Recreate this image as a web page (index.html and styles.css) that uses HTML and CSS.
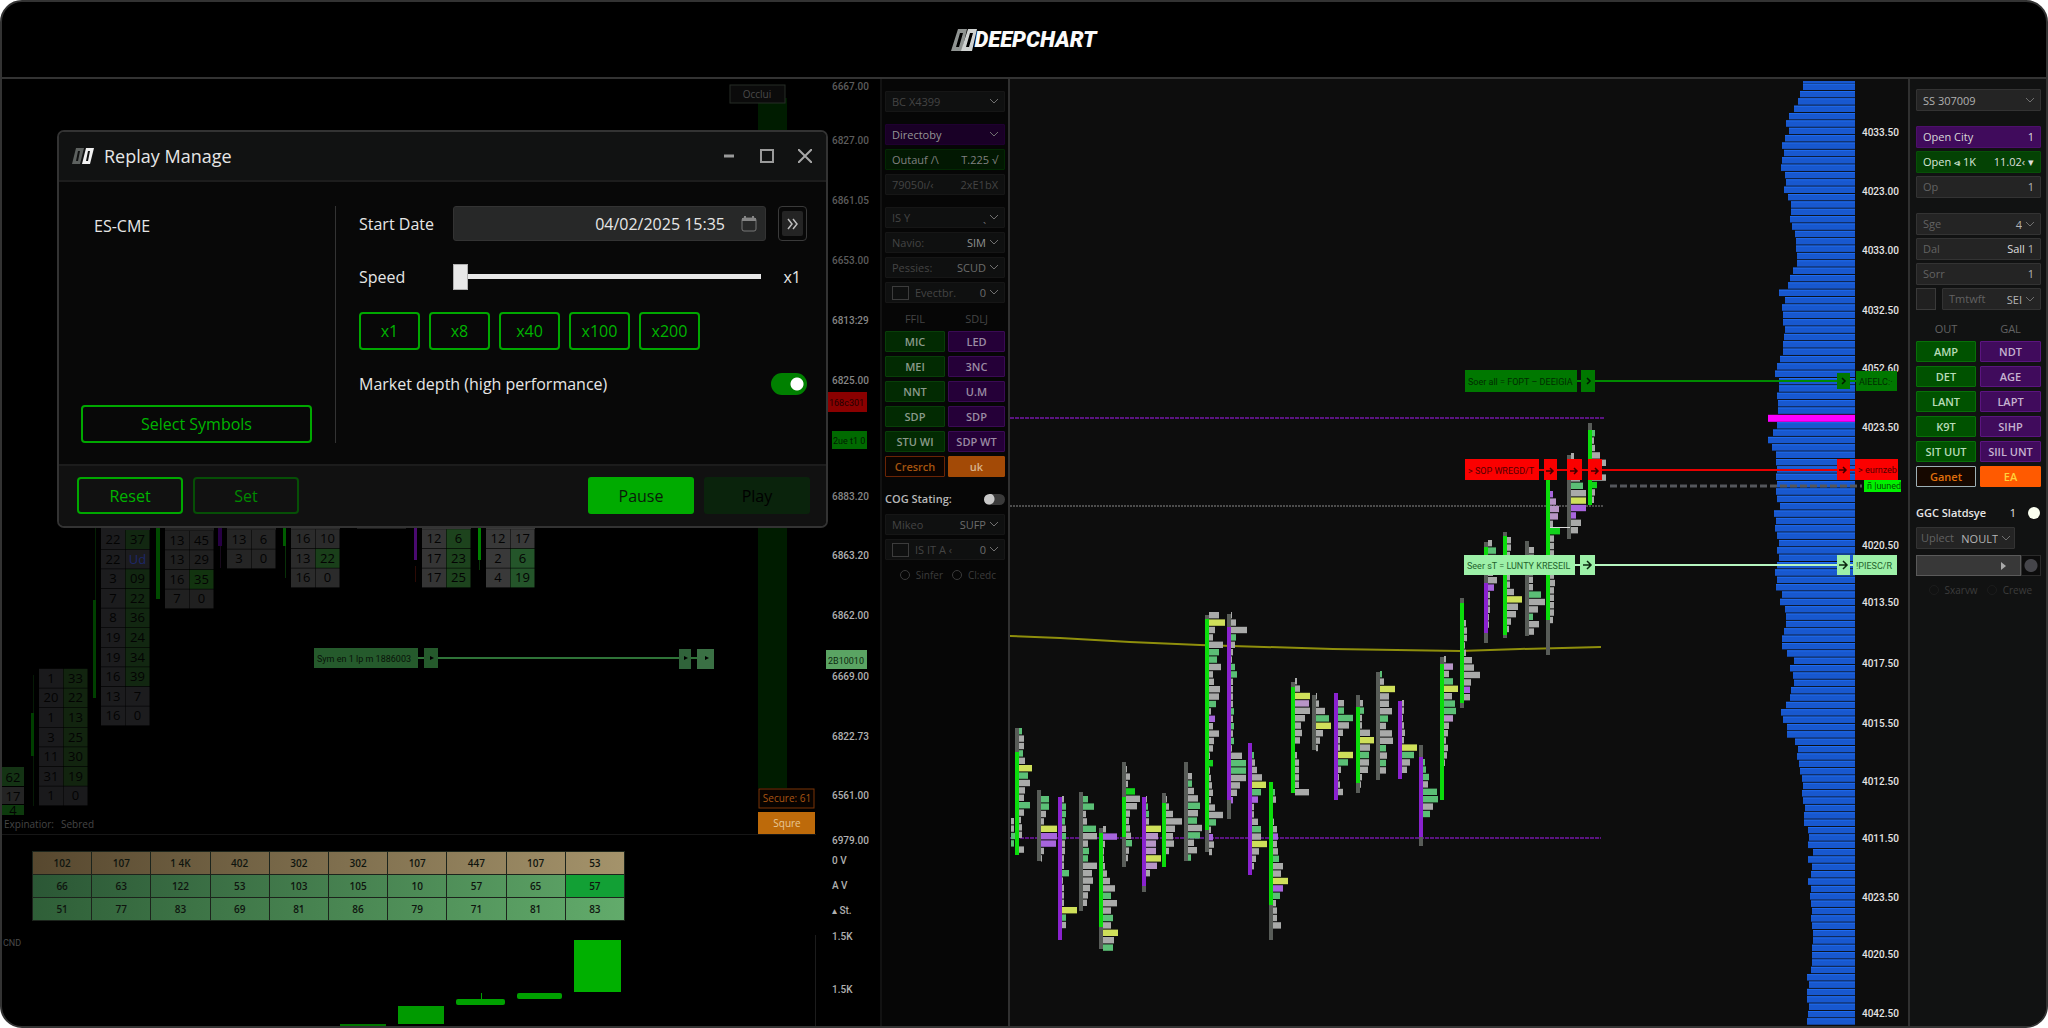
FILE: index.html
```html
<!DOCTYPE html>
<html lang="en">
<head>
    <meta charset="UTF-8">
    <meta name="viewport" content="width=device-width, initial-scale=1.0">
    <title>Deepchart</title>
    <link rel="stylesheet" href="styles.css">
</head>
<body>

<div class="app">

    <header class="header">
        <div class="logo">
            <svg class="logo-mark" width="28" height="22" viewBox="0 0 28 22">
                <path d="M7 0h9l-5 22H0zM9 4L5 18h3l4-14z" fill="#8f9391" fill-rule="evenodd"/>
                <path d="M17 0h9l-5 22H10zM19 4l-4 14h3l4-14z" fill="#cfd2d1" fill-rule="evenodd"/>
            </svg>
            <span>DEEPCHART</span>
        </div>
    </header>

    <main class="workspace">

        <!-- Left pane -->
        <section class="pane pane-left">

            <div class="studies">
                <svg class="chart" id="footprint" viewBox="2 79 814 756">
                    <rect x="758" y="98" width="29" height="690" fill="#001c00"/>
                    <rect x="730" y="85" width="55" height="18" fill="#0b0b0b" stroke="#262c26"/>
                    <text x="757" y="98" class="t-small" fill="#4a4a4a" text-anchor="middle">Occlui</text>
                    <g id="footprint-cells"></g>
                    <path d="M418 658H679M691 658h6" stroke="#2f7338" stroke-width="2"/>
                    <g fill="#255a2c">
                        <rect x="314" y="648" width="104" height="20"/>
                        <rect x="424" y="648" width="14" height="20"/>
                        <rect x="679" y="649" width="12" height="20" fill="#30633a"/>
                        <rect x="697" y="649" width="17" height="20" fill="#3a7044"/>
                    </g>
                    <text x="317" y="662" class="t-tag" fill="#081208">Sym en 1 lp m 1886003</text>
                    <path d="M430 656l4 2-4 2zM684 656l4 2-4 2zM705 656l4 2-4 2z" fill="#000"/>
                    <rect x="759" y="789" width="55" height="19" fill="#080300" stroke="#7a3406"/>
                    <text x="787" y="802" class="t-small" fill="#a85512" text-anchor="middle">Secure: 61</text>
                    <rect x="758" y="812" width="57" height="22" fill="#bd6a0a"/>
                    <text x="787" y="827" class="t-small" fill="#e8c897" text-anchor="middle">Squre</text>
                    <text x="4" y="828" class="t-small" fill="#454545">Expinatior:</text>
                    <text x="61" y="828" class="t-small" fill="#454545">Sebred</text>
                    <rect x="2" y="834" width="814" height="1" fill="#161616"/>
                </svg>

                <div class="volume">
                    <table class="volume-table">
                        <tr class="row-total"><td>102</td><td>107</td><td>1 4K</td><td>402</td><td>302</td><td>302</td><td>107</td><td>447</td><td>107</td><td>53</td></tr>
                        <tr class="row-ask"><td>66</td><td>63</td><td>122</td><td>53</td><td>103</td><td>105</td><td>10</td><td>57</td><td>65</td><td class="hot">57</td></tr>
                        <tr class="row-bid"><td>51</td><td>77</td><td>83</td><td>69</td><td>81</td><td>86</td><td>79</td><td>71</td><td>81</td><td>83</td></tr>
                    </table>
                </div>

                <svg class="chart" viewBox="2 920 814 106">
                    <text x="3" y="946" class="t-tag" fill="#4a4a4a">CND</text>
                    <g fill="#00a000">
                        <rect x="340" y="1024" width="46" height="2" fill="#007800"/>
                        <rect x="398" y="1006" width="46" height="18" fill="#009a00"/>
                        <rect x="456" y="999" width="49" height="6" rx="2"/>
                        <rect x="481" y="993" width="1" height="6"/>
                        <rect x="517" y="993" width="45" height="6" rx="2"/>
                        <rect x="574" y="940" width="47" height="52" fill="#00b000"/>
                    </g>
                    <rect x="815" y="935" width="1" height="91" fill="#1c1c1c"/>
                </svg>
            </div>

            <svg class="axis" viewBox="816 79 64 947">
                <g id="left-axis"></g>
                <rect x="827" y="392" width="40" height="20" fill="#8a0000"/>
                <text x="829" y="406" class="t-tag" fill="#240000">168c301</text>
                <rect x="832" y="431" width="35" height="18" fill="#006a00"/>
                <text x="833" y="444" class="t-tag" fill="#001c00">2ue t1 0</text>
                <rect x="826" y="650" width="41" height="19" fill="#5aa463"/>
                <text x="828" y="664" class="t-tag" fill="#0d2a10">2B10010</text>
            </svg>

            <aside class="panel panel-dim">
                <div class="field"><select aria-label="Contract"><option>BC X4399</option></select></div>
                <div class="field gap-top field-purple"><select aria-label="Direction"><option>Directoby</option></select></div>
                <div class="field field-green"><span>Outauf /\</span><output>T.225 √</output></div>
                <div class="field"><span>79050ı/‹</span><output>2xE1bX</output></div>
                <div class="field gap-top"><label for="l-is">IS Y</label><select id="l-is"><option>ˎ</option></select></div>
                <div class="field field-lit"><label for="l-nav">Navio:</label><select id="l-nav"><option>SIM</option></select></div>
                <div class="field"><label for="l-pos">Pessies:</label><select id="l-pos"><option>SCUD</option></select></div>
                <div class="field"><input type="checkbox" class="tick" id="l-ev"><label for="l-ev">Evectbr.</label><select aria-label="Evectbr"><option>0</option></select></div>

                <div class="orders">
                    <span>FFIL</span><span>SDLJ</span>
                    <button class="buy">MIC</button><button class="sell">LED</button>
                    <button class="buy">MEI</button><button class="sell">3NC</button>
                    <button class="buy">NNT</button><button class="sell">U.M</button>
                    <button class="buy">SDP</button><button class="sell">SDP</button>
                    <button class="buy">STU WI</button><button class="sell">SDP WT</button>
                    <button class="cancel">Cresrch</button><button class="close">uk</button>
                </div>

                <div class="strategy"><label for="l-cog">COG Stating:</label><input type="checkbox" class="pill" id="l-cog"></div>
                <div class="field"><label for="l-mk">Mikeo</label><select id="l-mk"><option>SUFP</option></select></div>
                <div class="field"><input type="checkbox" class="tick" id="l-ita"><label for="l-ita">IS IT A ‹</label><select aria-label="IS IT A"><option>0</option></select></div>
                <div class="radios">
                    <label><input type="radio" name="l-mode">Sinfer</label>
                    <label><input type="radio" name="l-mode">Cl:edc</label>
                </div>
            </aside>

            <!-- Replay window -->
            <div class="replay" role="dialog" aria-labelledby="replay-title">
                <div class="replay-head">
                    <svg width="22" height="16" viewBox="0 0 22 16">
                        <path d="M4 0h8L8 16H0zM6 3L4 13h2l2-10z" fill="#5d615f" fill-rule="evenodd"/>
                        <path d="M14 0h8l-4 16h-8zM16 3l-2 10h2l2-10z" fill="#f2f2f2" fill-rule="evenodd"/>
                    </svg>
                    <h2 id="replay-title">Replay Manage</h2>
                    <button aria-label="Minimize"><svg width="14" height="14" viewBox="0 0 14 14"><path d="M2 7h10" stroke="#9a9a9a" stroke-width="3"/></svg></button>
                    <button aria-label="Maximize"><svg width="14" height="14" viewBox="0 0 14 14"><path d="M1 1h12v12H1z" fill="none" stroke="#9a9a9a" stroke-width="2"/></svg></button>
                    <button aria-label="Close"><svg width="14" height="14" viewBox="0 0 14 14"><path d="M0 0l14 14M14 0L0 14" stroke="#a8a8a8" stroke-width="2"/></svg></button>
                </div>

                <div class="replay-body">
                    <div class="symbols">
                        <p>ES-CME</p>
                        <button class="outline">Select Symbols</button>
                    </div>
                    <div class="settings">
                        <div class="setting">
                            <label for="start-date">Start Date</label>
                            <div class="date">
                                <input type="text" id="start-date" value="04/02/2025 15:35">
                                <svg width="16" height="16" viewBox="0 0 16 16"><rect x="1" y="2" width="14" height="13" rx="2" fill="none" stroke="#777"/><path d="M1 2h14v3H1zM3 0h2v3H3zM11 0h2v3h-2z" fill="#858585"/></svg>
                            </div>
                            <button class="skip" aria-label="Skip forward"><svg width="21" height="25" viewBox="0 0 21 25"><rect width="21" height="25" rx="2" fill="#242424"/><path d="M6 8l4 5-4 5M11 8l4 5-4 5" fill="none" stroke="#bbb" stroke-width="1.500"/></svg></button>
                        </div>
                        <div class="setting setting-speed">
                            <label for="speed">Speed</label>
                            <input type="range" id="speed" min="1" max="200" value="1">
                            <output for="speed">x1</output>
                        </div>
                        <div class="speeds">
                            <button class="outline">x1</button>
                            <button class="outline">x8</button>
                            <button class="outline">x40</button>
                            <button class="outline">x100</button>
                            <button class="outline">x200</button>
                        </div>
                        <div class="setting setting-depth">
                            <label for="depth">Market depth (high performance)</label>
                            <input type="checkbox" class="toggle" id="depth" checked>
                        </div>
                    </div>
                </div>

                <div class="replay-foot">
                    <button class="outline">Reset</button>
                    <button class="outline outline-dim">Set</button>
                    <button class="pause">Pause</button>
                    <button class="play" disabled>Play</button>
                </div>
            </div>
        </section>

        <!-- Main chart -->
        <section class="pane pane-chart">
            <svg class="chart" viewBox="1010 79 898 947">
                <path d="M1010 418H1604M1010 838H1601" stroke="#5a1480" stroke-width="2" stroke-dasharray="4 1"/>
                <path d="M1010 506H1604" stroke="#4c4c4c" stroke-width="2" stroke-dasharray="2 1"/>
                <path d="M1010 636L1060 638 1130 642 1200 645 1333 649 1460 651 1520 649 1601 647" fill="none" stroke="#8f8f0c" stroke-width="2"/>
                <g id="profiles"></g>
                <g id="volume-profile"></g>
                <g id="right-axis"></g>

                <!-- Working orders -->
                <g class="order">
                    <path d="M1577 381H1856" stroke="#008a00" stroke-width="2"/>
                    <path d="M1465 370h112v22h-112zM1581 370h14v22h-14zM1837 373h13v16h-13zM1856 371h41v20h-41z" fill="#007800"/>
                    <text x="1468" y="385" fill="#002c00">Soer all = FOPT – DEEIGIA</text>
                    <text x="1859" y="385" fill="#002c00">AIEELC:·</text>
                    <path d="M1587 378l3 3-3 3M1842 378l3 3-3 3" stroke="#001800" stroke-width="1.500" fill="none"/>
                </g>
                <path d="M1610 486H1862" stroke="#55575c" stroke-width="3" stroke-dasharray="7 3"/>
                <g class="order">
                    <path d="M1539 470H1856" stroke="#e80000" stroke-width="2"/>
                    <path d="M1465 459h74v21h-74zM1544 459h13v21h-13zM1567 459h15v21h-15zM1588 459h14v21h-14zM1837 459h13v21h-13zM1855 459h43v21h-43z" fill="#fb0000"/>
                    <text x="1468" y="474" fill="#500000">&gt; SOP WREGD/T</text>
                    <text x="1858" y="473" fill="#500000">&gt; eurnzeb</text>
                    <path d="M1546 471h7m-3-3l3 3-3 3M1570 471h7m-3-3l3 3-3 3M1591 471h7m-3-3l3 3-3 3M1839 470h7m-3-3l3 3-3 3" stroke="#400000" stroke-width="1.500" fill="none"/>
                    <path d="M1864 480h37v12h-37z" fill="#00f000"/>
                    <text x="1867" y="489" fill="#004c00">ñ |uuned</text>
                </g>
                <g class="order">
                    <path d="M1575 565H1856" stroke="#b6f5c0" stroke-width="2"/>
                    <path d="M1464 555h111v20h-111zM1580 555h15v20h-15zM1837 555h13v20h-13zM1853 555h44v20h-44z" fill="#9df0a8"/>
                    <text x="1467" y="569" fill="#23632c">Seer sT = LUNTY KRESEIL</text>
                    <text x="1856" y="569" fill="#23632c">!PIESC/R</text>
                    <path d="M1583 565h8m-4-4l4 4-4 4M1839 565h8m-4-4l4 4-4 4" stroke="#0c260f" stroke-width="1.500" fill="none"/>
                </g>
            </svg>
        </section>

        <!-- Right panel -->
        <aside class="panel panel-right">
            <div class="field field-lit"><select aria-label="Contract"><option>SS 307009</option></select></div>
            <div class="field gap-top field-purple"><span>Open City</span><output>1</output></div>
            <div class="field field-green"><span>Open ⩹ 1K</span><output>11.02‹ ▾</output></div>
            <div class="field"><span>Op</span><output>1</output></div>
            <div class="field gap-top"><label for="r-sge">Sge</label><select id="r-sge"><option>4</option></select></div>
            <div class="field"><span>Dal</span><output><b>Sall</b> 1</output></div>
            <div class="field"><span>Sorr</span><output>1</output></div>
            <div class="field-split">
                <input type="checkbox" class="box" aria-label="Enable Tmtwft">
                <div class="field"><label for="r-tm">Tmtwft</label><select id="r-tm"><option>SEI</option></select></div>
            </div>

            <div class="orders">
                <span>OUT</span><span>GAL</span>
                <button class="buy">AMP</button><button class="sell">NDT</button>
                <button class="buy">DET</button><button class="sell">AGE</button>
                <button class="buy">LANT</button><button class="sell">LAPT</button>
                <button class="buy">K9T</button><button class="sell">SIHP</button>
                <button class="buy">SIT UUT</button><button class="sell">SIIL UNT</button>
                <button class="cancel">Ganet</button><button class="close">EA</button>
            </div>

            <div class="strategy"><label for="r-ggc">GGC Slatdsye</label><span>1</span><input type="checkbox" class="dot" id="r-ggc"></div>
            <div class="field field-short"><label for="r-up">Uplect</label><select id="r-up"><option>NOULT</option></select></div>
            <div class="runner">
                <button class="run" aria-label="Run"><svg width="6" height="8" viewBox="0 0 6 8"><path d="M0 0l5 4-5 4z" fill="#aaa"/></svg></button>
                <button class="knob" aria-label="Record"></button>
            </div>
            <div class="radios">
                <label><input type="radio" name="r-mode">Sxarvw</label>
                <label><input type="radio" name="r-mode">Crewe</label>
            </div>
        </aside>
    </main>
</div>

<script src="charts.js"></script>
</body>
</html>
```
FILE: styles.css
```css
* {
    box-sizing: border-box;
}

body {
    margin: 0;
    background-color: #ffffff;
    color: #e6e6e6;
    font-family: "Open Sans", "Noto Sans", sans-serif;
}

button, input, select, output {
    font-family: inherit;
    font-size: inherit;
    color: inherit;
}

button {
    padding: 0;
    cursor: pointer;
}

svg {
    display: block;
}

.app {
    display: flex;
    flex-direction: column;
    min-height: 100vh;
    border: 2px solid #333333;
    border-radius: 22px;
    background-color: #000000;
    overflow: hidden;
}

/* Header */
.header {
    display: flex;
    align-items: center;
    justify-content: center;
    height: 77px;
    border-bottom: 2px solid #333333;
}

.logo {
    display: flex;
    align-items: center;
    color: #fafafa;
    font-family: Roboto, sans-serif;
    font-size: 22px;
    font-weight: 900;
    font-style: italic;
    line-height: 24px;
}

.logo-mark {
    margin-right: -5px;
}

/* Layout */
.workspace {
    flex: 1;
    display: grid;
    grid-template-columns: minmax(0, 1008fr) minmax(0, 900fr) 136px;
}

.pane {
    border-right: 2px solid #303030;
}

.pane-left {
    position: relative;
    display: grid;
    grid-template-columns: minmax(0, 1fr) 64px 128px;
}

.pane-chart {
    background-color: #0d0d0d;
}

.chart, .axis {
    width: 100%;
}

.t-small {
    font-size: 10px;
}

.t-axis {
    font-family: Roboto, sans-serif;
    font-size: 10px;
    font-weight: 500;
}

.t-tag, .order text {
    font-family: Roboto, sans-serif;
    font-size: 9px;
}

.t-cell {
    font-size: 13px;
    text-anchor: middle;
}

/* Volume table */
.volume {
    height: 85px;
    padding: 16px 191px 0 30px;
}

.volume-table {
    width: 100%;
    border-collapse: collapse;
    table-layout: fixed;
    color: #0f150f;
    font-size: 10px;
    font-weight: 600;
    text-align: center;
}

.volume-table td {
    height: 23px;
    padding: 0;
    border: 1px solid #1c241c;
    line-height: 20px;
}

.row-total {
    background: linear-gradient(90deg, #57482f, #a4936b);
}

.row-ask {
    background: linear-gradient(90deg, #2b5735, #5fa768);
}

.row-bid {
    background: linear-gradient(90deg, #2f5f38, #62ab6b);
}

.volume-table .hot {
    background-color: #12a035;
}

/* Order panels */
.panel {
    display: flex;
    flex-direction: column;
    gap: 4px;
    font-size: 11px;
    line-height: 14px;
}

.panel-dim {
    padding: 12px 3px 0 3px;
    border-left: 2px solid #121212;
    background-color: #060606;
    color: #444444;
}

.panel-right {
    gap: 3px;
    padding: 10px 5px 0 6px;
    background-color: #111212;
    color: #626262;
}

.field {
    display: flex;
    align-items: center;
    height: 21px;
    padding: 0 6px;
    border: 1px solid #161616;
    border-radius: 1px;
    background-color: #0f1010;
}

.panel-right .field {
    height: 22px;
    border-color: #333333;
    background-color: #242424;
}

.field.gap-top {
    margin-top: 8px;
}

.panel-right .field.gap-top {
    margin-top: 12px;
}

.field select {
    flex: 1;
    min-width: 0;
    height: 18px;
    padding: 0 12px 0 0;
    border: 0;
    appearance: none;
    background: no-repeat right center / 8px 5px url("data:image/svg+xml,%3Csvg xmlns='http://www.w3.org/2000/svg' viewBox='0 0 8 5'%3E%3Cpath d='M0 0l4 4 4-4' fill='none' stroke='%23707070' stroke-width='1'/%3E%3C/svg%3E");
}

.field label + select {
    text-align: right;
    text-align-last: right;
    color: #6c6c6c;
}

.field output {
    margin-left: auto;
}

.panel-dim .field-purple {
    border-color: #1f0030;
    background-color: #190026;
    color: #959595;
}

.panel-dim .field-green {
    border-color: #022802;
    background-color: #021802;
    color: #808080;
}

.panel-dim .field-lit select {
    color: #909090;
}

.panel-right .field-purple {
    border-color: #4d0f6c;
    background-color: #400b5c;
    color: #d8d8d8;
}

.panel-right .field-green {
    border-color: #075007;
    background-color: #044204;
    color: #d8e8d8;
}

.panel-right .field-lit {
    color: #b0b0b0;
}

.panel-right output, .panel-right .field label + select {
    color: #b4b4b4;
}

.panel-right .field-purple output, .panel-right .field-green output, .panel-right output b {
    color: #dedede;
    font-weight: normal;
}

.field-split {
    display: grid;
    grid-template-columns: 20px 1fr;
    gap: 6px;
}

.tick {
    width: 17px;
    height: 14px;
    margin: 0 6px 0 0;
    border: 1px solid #3c3c3c;
    appearance: none;
}

.box {
    width: 20px;
    height: 22px;
    margin: 0;
    border: 1px solid #3a3a3a;
    background-color: #202020;
    appearance: none;
}

.orders {
    display: grid;
    grid-template-columns: 60px 1fr;
    gap: 4px 3px;
    margin-top: 4px;
    text-align: center;
    line-height: 16px;
}

.panel-right .orders {
    gap: 4px;
    margin-top: 8px;
}

.orders button {
    height: 21px;
    border: 1px solid;
    border-radius: 1px;
    font-weight: 600;
    line-height: 18px;
}

.orders .buy {
    border-color: #083e08;
    background-color: #022a02;
    color: #8b9a8b;
}

.orders .sell {
    border-color: #3a0a54;
    background-color: #250038;
    color: #9a8ba3;
}

.orders .cancel {
    border: 1px solid #6a2405;
    background-color: #0a0300;
    color: #a5540f;
}

.orders .close {
    border-color: #a34a06;
    background-color: #a34a06;
    color: #d8b48c;
}

.panel-right .orders .buy {
    border-color: #087008;
    background-color: #005200;
    color: #b8dcb8;
}

.panel-right .orders .sell {
    border-color: #5b1480;
    background-color: #400b5c;
    color: #c5b2d0;
}

.panel-right .orders .cancel {
    border-color: #9eb0b5;
    background-color: #160800;
    color: #e0700c;
}

.panel-right .orders .close {
    border-color: #ff5a00;
    background-color: #ff5a00;
    color: #ffd23a;
}

.strategy {
    display: flex;
    align-items: center;
    gap: 12px;
    height: 22px;
    margin-top: 7px;
    color: #b8b8b8;
}

.strategy label {
    flex: 1;
    font-weight: 600;
    white-space: nowrap;
}

.panel-right .strategy {
    margin-top: 12px;
    color: #e6e6e6;
}

.pill {
    width: 21px;
    height: 11px;
    margin: 0;
    border-radius: 6px;
    appearance: none;
    background: radial-gradient(circle at 5px 5px, #c8c8c8 5px, #3a3a3a 6px);
}

.dot {
    width: 12px;
    height: 12px;
    margin: 0 1px 0 0;
    border-radius: 50%;
    appearance: none;
    background-color: #fbfff0;
}

.panel-right .field-short {
    gap: 4px;
    width: 99px;
    padding: 0 4px;
}

.runner {
    display: grid;
    grid-template-columns: 1fr 20px;
    margin-top: 3px;
}

.run {
    display: flex;
    align-items: center;
    justify-content: flex-end;
    height: 21px;
    padding-right: 13px;
    border: 1px solid #5a5a5a;
    background-color: #383838;
}

.knob {
    border: 1px solid #2b2b2b;
    background: radial-gradient(circle, #45454a 6px, #0c0c0c 7px);
}

.radios {
    display: flex;
    justify-content: flex-end;
    gap: 9px;
    padding-right: 9px;
    font-size: 10px;
    line-height: 22px;
    color: #3c3c3c;
}

.radios label {
    display: flex;
    align-items: center;
    gap: 6px;
}

.radios input {
    width: 10px;
    height: 10px;
    margin: 0;
    border: 1px solid #3a3a3a;
    border-radius: 50%;
    appearance: none;
}

.panel-right .radios input {
    border-color: #1c1c1c;
}

/* Replay window */
.replay {
    position: absolute;
    top: 51px;
    left: 55px;
    width: 771px;
    border: 2px solid #333333;
    border-radius: 7px;
    background-color: #080808;
    font-size: 17px;
    line-height: 24px;
    overflow: hidden;
}

.replay-head {
    display: flex;
    align-items: center;
    gap: 24px;
    height: 50px;
    padding: 0 14px 0 13px;
    border-bottom: 2px solid #1d1d1d;
    background-color: #111212;
}

.replay-head h2 {
    flex: 1;
    margin: 0 0 0 -14px;
    font-size: 18px;
    font-weight: normal;
}

.replay-head button {
    border: 0;
    background: none;
}

.replay-body {
    display: grid;
    grid-template-columns: 277px 1fr;
    padding: 24px 19px 21px 0;
    font-size: 16px;
}

.symbols {
    display: flex;
    flex-direction: column;
    justify-content: space-between;
    height: 237px;
    padding: 0 23px 0 22px;
    border-right: 1px solid #333333;
}

.symbols p {
    margin: 8px 0 0 13px;
}

.outline {
    height: 38px;
    border: 2px solid #00a800;
    border-radius: 4px;
    background-color: transparent;
    color: #00b400;
}

.outline-dim {
    border-color: #064f06;
    color: #008a00;
}

.settings {
    padding-left: 23px;
}

.setting {
    display: flex;
    align-items: center;
    height: 35px;
}

.setting label {
    width: 94px;
}

.date {
    flex: 1;
    display: flex;
    align-items: center;
    gap: 16px;
    height: 35px;
    padding-right: 8px;
    border: 1px solid #333333;
    border-radius: 3px;
    background-color: #272828;
}

.date input {
    flex: 1;
    min-width: 0;
    padding: 0;
    border: 0;
    background: none;
    text-align: right;
}

.skip {
    display: flex;
    align-items: center;
    justify-content: center;
    width: 29px;
    height: 35px;
    margin-left: 12px;
    border: 1px solid #3a3a3a;
    border-radius: 4px;
    background-color: #080808;
}

.setting-speed {
    margin-top: 18px;
}

.setting-speed input {
    flex: 1;
    height: 26px;
    margin: 0;
    appearance: none;
    background: linear-gradient(#e8e8e8, #e8e8e8) no-repeat center / 100% 5px;
}

.setting-speed input::-webkit-slider-thumb {
    width: 15px;
    height: 26px;
    border: 1px solid #b0b0b0;
    appearance: none;
    background-color: #e8e8e8;
}

.setting-speed output {
    width: 46px;
    padding-right: 6px;
    text-align: right;
}

.speeds {
    display: grid;
    grid-template-columns: repeat(5, 61px);
    gap: 9px;
    margin-top: 18px;
}

.setting-depth {
    justify-content: space-between;
    margin-top: 16px;
}

.setting-depth label {
    width: auto;
}

.toggle {
    width: 36px;
    height: 22px;
    margin: 0;
    border-radius: 11px;
    appearance: none;
    background: radial-gradient(circle at 26px 11px, #ffffff 6px, #008000 7px);
}

.replay-foot {
    display: flex;
    gap: 10px;
    padding: 11px 16px 12px 18px;
    border-top: 2px solid #1c1c1c;
    background-color: #111111;
    font-size: 16px;
}

.replay-foot button {
    width: 106px;
    height: 37px;
}

.replay-foot .pause, .replay-foot .play {
    border: 0;
    border-radius: 3px;
}

.replay-foot .pause {
    margin-left: auto;
    background-color: #00ab00;
    color: #0a1a0a;
}

.replay-foot .play {
    background-color: #0a230c;
    color: #000000;
}
```
FILE: charts.js
```js
const NS = 'http://www.w3.org/2000/svg';

function add(parent, tag, attrs, text) {
    const el = document.createElementNS(NS, tag);
    for (const key in attrs) el.setAttribute(key, attrs[key]);
    if (text !== undefined) el.textContent = text;
    parent.appendChild(el);
}

function rect(parent, x, y, width, height, fill) {
    add(parent, 'rect', { x, y, width, height, fill });
}

// Price axes: [label, y]
const leftPrices = [
    ['6667.00', 86], ['6827.00', 140], ['6861.05', 200], ['6653.00', 260], ['6813:29', 320],
    ['6825.00', 380], ['6883.20', 496], ['6863.20', 555], ['6862.00', 615], ['6669.00', 676],
    ['6822.73', 736], ['6561.00', 795], ['6979.00', 840], ['0 V', 860], ['A V', 885],
    ['▴ St.', 910], ['1.5K', 936], ['1.5K', 989]
];
const rightPrices = [
    ['4033.50', 132], ['4023.00', 191], ['4033.00', 250], ['4032.50', 310], ['4052.60', 368],
    ['4023.50', 427], ['4020.50', 545], ['4013.50', 602], ['4017.50', 663], ['4015.50', 723],
    ['4012.50', 781], ['4011.50', 838], ['4023.50', 897], ['4020.50', 954], ['4042.50', 1013]
];

const leftAxis = document.getElementById('left-axis');
leftPrices.forEach(([label, y]) => {
    const fill = y < 300 ? '#5c5c5c' : y < 550 ? '#858585' : '#b0b0b0';
    add(leftAxis, 'text', { x: 832, y: y + 4, class: 't-axis', fill }, label);
});

const rightAxis = document.getElementById('right-axis');
rightPrices.forEach(([label, y]) => {
    add(rightAxis, 'text', { x: 1862, y: y + 4, class: 't-axis', fill: '#e4e4e4' }, label);
});

// Footprint columns: bottom edge and bid/ask pairs, g marks a green cell
const footprint = [
    { x: 39, bottom: 806, gray: '#1a1a1c', green: '#12240f', rows: ['1 33g', '20 22g', '1 13g', '3 25g', '11 30g', '31 19g', '1 0'] },
    { x: 101, bottom: 726, gray: '#1c1c1e', green: '#122711', rows: ['22 37g', '22 Ud', '3 09g', '7 22g', '8 36g', '19 24g', '19 34g', '16 39g', '13 7', '16 0'] },
    { x: 165, bottom: 609, gray: '#202020', green: '#12330f', rows: ['13 45', '13 29', '16 35g', '7 0'] },
    { x: 227, bottom: 569, gray: '#252525', green: '#143a14', rows: ['13 6', '3 0'] },
    { x: 291, bottom: 588, gray: '#2b2b2b', green: '#1a3f1a', rows: ['16 10', '13 22g', '16 0'] },
    { x: 422, bottom: 588, gray: '#353535', green: '#1d431d', rows: ['12 6g', '17 23g', '17 25g'] },
    { x: 486, bottom: 588, gray: '#393939', green: '#24552a', rows: ['12 17', '2 6g', '4 19g'] }
];

const cells = document.getElementById('footprint-cells');
footprint.forEach(col => {
    const top = col.bottom - col.rows.length * 19.6;
    if (col.bottom < 800) rect(cells, col.x, top - 19, 49, 19, col.gray);
    col.rows.forEach((row, i) => {
        const y = top + i * 19.6;
        row.split(' ').forEach((value, side) => {
            const x = col.x + side * 24.5;
            rect(cells, x, y, 24, 19, value.endsWith('g') ? col.green : col.gray);
            add(cells, 'text', { x: x + 12, y: y + 14, class: 't-cell', fill: value === 'Ud' ? '#1c2768' : '#030303' }, value.replace('g', ''));
        });
    });
});
rect(cells, 357, 520, 49, 9, '#1c1c1c');
rect(cells, 2, 767, 22, 19, '#143314');
rect(cells, 2, 787, 22, 17, '#242424');
rect(cells, 2, 805, 22, 10, '#0d3a0d');
add(cells, 'text', { x: 13, y: 782, class: 't-cell', fill: '#030303' }, '62');
add(cells, 'text', { x: 13, y: 801, class: 't-cell', fill: '#030303' }, '17');
add(cells, 'text', { x: 13, y: 815, class: 't-cell', fill: '#030303' }, '4');

// Thin candles between the columns: x, y, width, height, fill
[
    [33, 675, 1, 131, '#061a06'], [31, 713, 3, 43, '#003f00'],
    [95, 520, 1, 80, '#042004'], [93, 600, 3, 98, '#004000'],
    [156, 520, 4, 79, '#004a00'], [218, 520, 4, 26, '#270044'], [220, 546, 1, 22, '#180a1c'],
    [283, 520, 3, 26, '#005c00'], [285, 546, 1, 32, '#083008'],
    [414, 520, 3, 40, '#4a0a70'], [415, 566, 1, 16, '#2c0a05'],
    [478, 520, 3, 40, '#008000'], [479, 560, 1, 10, '#0a330a']
].forEach(bar => rect(cells, ...bar));

// Candle profiles. body: [color, from, to], rows: widths with a color letter
const colors = {
    w: '#a9aaa9', g: '#5bbf76', G: '#12d21c', p: '#a765dc', l: '#b795c6', y: '#cfe05a',
    grey: '#585c58', green: '#0bdc0b', purple: '#8a22cf'
};
const candles = [
    { x: 1008, body: [], start: 818, rows: '3 3 4g 3g' },
    { x: 1016, body: [['grey', 728, 855], ['green', 752, 855]], start: 728, rows: '3g 5 5 4g 6 13y 9g 11 6 5 11g 5 2 3 3 0 5' },
    { x: 1038, body: [['grey', 790, 861]], start: 796, rows: '8g 8g 5 3 16y 16p 15p 3 1' },
    { x: 1059, body: [['purple', 797, 940]], start: 796, rows: '2 4g 4g 3g 4 4g 3 3 2 2 7g 1 2 2 2 15y 4g 4' },
    { x: 1080, body: [['grey', 792, 911]], start: 796, rows: '5g 11g 3 4 13g 14 5 6g 5g 14 9 10 7 5 4' },
    { x: 1100, body: [['grey', 828, 949], ['green', 833, 927]], start: 826, rows: '3 14p 2 1 1 2 4 7 12 8g 14 8 10g 8 15y 11 10g' },
    { x: 1123, body: [['grey', 762, 867], ['green', 797, 837]], start: 766, rows: '1 4 2 9G 14 11 4 3 4 5 6g 3 2' },
    { x: 1143, body: [['grey', 850, 892], ['purple', 797, 886]], start: 796, rows: '1 2g 3g 3 15y 12l 10l 10l 15y 11l 4' },
    { x: 1163, body: [['grey', 793, 820], ['green', 803, 867]], start: 796, rows: '1 3 7 16 9 7 8 3' },
    { x: 1185, body: [['grey', 762, 861]], start: 773, rows: '4 4g 6 10 12g 10 9g 14 12g 6 9 3g' },
    { x: 1206, body: [['grey', 615, 852], ['green', 619, 830]], start: 612, rows: '10 16y 6 4 14 10g 8g 12 4 5 11 10 7g 2 6p 4 10 5 4 1 4G 1 2 3 4 2 6 14 7g 2 4p 5 3' },
    { x: 1228, body: [['grey', 614, 819], ['purple', 627, 800]], start: 612, rows: '1 5 16 5g 4 2 1 4g 6g 2 2 2 2 3g 2 3g 2 3g 1 11 15g 15g 15 9 6 2p' },
    { x: 1249, body: [['purple', 743, 875]], start: 752, rows: '2g 3 5 10 14y 9g 6p 2 2 6 9g 9 15y 7 4 2' },
    { x: 1270, body: [['grey', 782, 940], ['green', 782, 905]], start: 789, rows: '2g 3 0 0 1 4 5p 4 5 6g 10 8 15y 10p 7g 3 4 4 8' },
    { x: 1292, body: [['grey', 682, 700], ['green', 687, 793]], start: 678, rows: '2 5 15y 14l 15 10 6 7 5 0 2 4 4 4 4 14' },
    { x: 1313, body: [['grey', 695, 750]], start: 693, rows: '1 3 9 13g 15y 7 4 2' },
    { x: 1335, body: [['purple', 693, 800]], start: 700, rows: '6 6g 15g 11 5 2 2 15y 10g 3 1 2 5' },
    { x: 1357, body: [['grey', 695, 793], ['green', 707, 783]], start: 700, rows: '3 4g 2 2 10 14y 10 9g 9 8 2 1' },
    { x: 1377, body: [['grey', 672, 780]], start: 671, rows: '2g 4 15y 9 9 12 8g 6 12 13 6g 7 6g 6' },
    { x: 1399, body: [['purple', 701, 779]], start: 700, rows: '2 2 1 2 3 2 15y 12g 8 5' },
    { x: 1420, body: [['grey', 745, 846], ['purple', 757, 837]], start: 759, rows: '2g 3g 6g 5 14g 15g 10 7g' },
    { x: 1441, body: [['grey', 657, 670], ['green', 664, 800]], start: 656, rows: '2 9l 5 9g 14y 8 11g 12g 9l 5 4 2 4 3 1' },
    { x: 1461, body: [['grey', 598, 708], ['green', 603, 703]], start: 620, rows: '2 3 3 1 2 8 10 16 7 6p 6' },
    { x: 1485, body: [['grey', 542, 643], ['green', 547, 560], ['purple', 583, 633]], start: 540, rows: '4 8g 8 6 5 9 6p 2 2 2 1 1' },
    { x: 1504, body: [['grey', 532, 638], ['green', 536, 635]], start: 537, rows: '4 4 3 3 3 3 3 7 15y 11 9 4 2' },
    { x: 1526, body: [['grey', 541, 636]], start: 547, rows: '5 5 5 4 4 4 12g 16 9 4g 10 5' },
    { x: 1547, body: [['grey', 575, 655], ['green', 480, 620]], start: 491, rows: '3p 6l 9l 8l 3 10G 4 4 4 4 4 4 5 4 4 4 4 3' },
    { x: 1568, body: [['grey', 455, 539]], start: 453, rows: '3 2 5 9 12g 15 15y 15p 5p 10 7' },
    { x: 1589, body: [['grey', 423, 440], ['green', 430, 505]], start: 430, rows: '3g 2 3 8 14 10 14 5G 3 2' }
];

const profiles = document.getElementById('profiles');
candles.forEach(candle => {
    candle.body.forEach(([name, from, to]) => {
        rect(profiles, candle.x - 1, from, 4, to - from, colors[name]);
    });
    candle.rows.split(' ').forEach((row, i) => {
        const width = parseInt(row, 10);
        const color = colors[row.replace(/\d/g, '') || 'w'];
        if (width) rect(profiles, candle.x + 3, candle.start + i * 7.4, width, 6.4, color);
    });
});
rect(profiles, 1550, 527, 20, 1, '#dddddd');

// Session volume profile, drawn from the axis to the left
const volumes = [
    52, 55, 57, 61, 66, 69, 66, 70, 73, 71, 73, 74, 70, 69, 71, 67, 64, 64, 65, 63, 60, 59,
    59, 58, 58, 62, 65, 67, 76, 70, 73, 72, 72, 70, 71, 72, 72, 75, 78, 80, 76, 76, 78, 77,
    77, 87, 78, 82, 87, 83, 79, 79, 78, 79, 78, 79, 78, 75, 81, 79, 80, 78, 76, 78, 76, 78,
    80, 78, 79, 73, 75, 70, 69, 69, 71, 73, 73, 68, 61, 65, 62, 61, 64, 65, 69, 74, 72, 68,
    68, 60, 57, 58, 56, 55, 53, 52, 53, 52, 50, 51, 51, 47, 46, 47, 42, 47, 43, 44, 47, 44,
    45, 44, 43, 44, 43, 42, 42, 43, 43, 43, 44, 48, 46, 48, 48, 46, 47, 48
];
const pointOfControl = 45;

const volumeProfile = document.getElementById('volume-profile');
rect(volumeProfile, 1803, 81, 52, 2, '#1858cf');
volumes.forEach((width, i) => {
    const y = 83.6 + i * 7.36;
    if (i === pointOfControl) {
        rect(volumeProfile, 1855 - width, y, width, 7, '#ff00ff');
        return;
    }
    rect(volumeProfile, 1855 - width, y, width, 6.4, '#1858cf');
    rect(volumeProfile, 1855 - width, y, width, 1, '#1f6cf0');
});
```
